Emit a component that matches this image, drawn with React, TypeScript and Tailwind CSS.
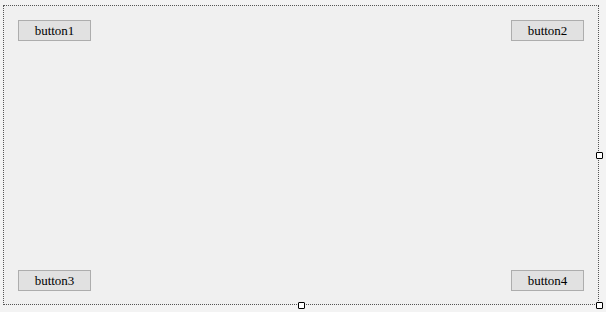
function Btn({ label }: { label: string }) {
    return (
        <button
            type="button"
            className="w-[73px] h-[21px] bg-[#e1e1e1] border border-[#adadad] text-black text-[13px] leading-none flex items-center justify-center pb-[1px]"
            style={{ fontFamily: '"Liberation Serif", "DejaVu Serif", serif' }}
        >
            {label}
        </button>
    );
}

function Handle({ className }: { className: string }) {
    return <div className={`absolute w-[7px] h-[7px] bg-white border border-black rounded-[1px] ${className}`} />;
}

export default function App() {
    return (
        <div className="w-[606px] h-[312px] bg-[#f3f3f3] pt-[5px] pl-[3px]">
            <div className="relative w-[596px] h-[300px] bg-[#f0f0f0] border border-dotted border-[#555555] pt-[14px] pl-[14px] pr-[14px] pb-[13px] flex flex-col justify-between">
                <div className="flex justify-between">
                    <Btn label="button1" />
                    <Btn label="button2" />
                </div>
                <div className="flex justify-between">
                    <Btn label="button3" />
                    <Btn label="button4" />
                </div>
                <Handle className="right-[-5px] top-[146px]" />
                <Handle className="left-[294px] bottom-[-5px]" />
                <Handle className="right-[-5px] bottom-[-5px]" />
            </div>
        </div>
    );
}
